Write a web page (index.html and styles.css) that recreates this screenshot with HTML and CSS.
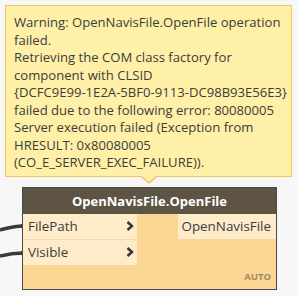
FILE: index.html
```html
<!DOCTYPE html>
<html lang="en">
<head>
  <meta charset="UTF-8">
  <title>OpenNavisFile.OpenFile</title>
  <link rel="stylesheet" href="styles.css">
</head>
<body>
  <div class="warning">
    Warning: OpenNavisFile.OpenFile operation<br>
    failed.<br>
    Retrieving the COM class factory for<br>
    component with CLSID<br>
    {DCFC9E99-1E2A-5BF0-9113-DC98B93E56E3}<br>
    failed due to the following error: 80080005<br>
    Server execution failed (Exception from<br>
    HRESULT: 0x80080005<br>
    (CO_E_SERVER_EXEC_FAILURE)).
  </div>

  <div class="canvas">
    <svg class="wires" width="26" height="90" viewBox="0 0 26 90">
      <path d="M0 55 C 8 53, 14 51, 23 51" />
      <path d="M0 81 C 8 79, 14 78, 23 78" />
      <circle cx="23" cy="51" r="2.5" />
      <circle cx="23" cy="78" r="2.5" />
    </svg>
    <div class="node">
      <div class="node-title">OpenNavisFile.OpenFile</div>
      <div class="node-body">
        <div class="inputs">
          <div class="port">
            <span>FilePath</span>
            <svg class="chev" width="8" height="10" viewBox="0 0 8 10"><path d="M1.5 1 L6 5 L1.5 9" /></svg>
          </div>
          <div class="port">
            <span>Visible</span>
            <svg class="chev" width="8" height="10" viewBox="0 0 8 10"><path d="M1.5 1 L6 5 L1.5 9" /></svg>
          </div>
        </div>
        <div class="outputs">
          <div class="out">OpenNavisFile</div>
        </div>
      </div>
      <div class="node-foot">AUTO</div>
    </div>
  </div>
</body>
</html>
```

FILE: styles.css
```css
body {
  margin: 0;
  background: #f7f7f7;
  font-family: "Open Sans", sans-serif;
}
.warning {
  position: relative;
  box-sizing: border-box;
  width: 287px;
  margin: 5px 0 0 5px;
  padding: 8px 4px 4px 8px;
  background: #fff0a8;
  border: 1px solid #f3c462;
  color: #3c3c3c;
  font-size: 13.1px;
  line-height: 17.5px;
  white-space: nowrap;
}
.warning::before {
  content: "";
  position: absolute;
  left: 135px;
  bottom: -8px;
  border-left: 8px solid transparent;
  border-right: 8px solid transparent;
  border-top: 7px solid #f3c462;
}
.warning::after {
  content: "";
  position: absolute;
  left: 136px;
  bottom: -6px;
  border-left: 7px solid transparent;
  border-right: 7px solid transparent;
  border-top: 6px solid #fff0a8;
}
.canvas {
  position: relative;
  padding: 10px 0 0 22px;
}
.wires {
  position: absolute;
  left: 0;
  top: -2px;
}
.wires path {
  fill: none;
  stroke: #3b3b3b;
  stroke-width: 3.5;
}
.wires circle {
  fill: #3b3b3b;
}
.node {
  position: relative;
  box-sizing: border-box;
  width: 255px;
  height: 103px;
  background: #fcd793;
  border: 1px solid #4a4a4a;
  display: flex;
  flex-direction: column;
}
.node-title {
  height: 26px;
  background: #5e5444;
  color: #fff;
  font-weight: bold;
  font-size: 13px;
  line-height: 26px;
  text-align: center;
}
.node-body {
  display: flex;
  justify-content: space-between;
}
.inputs {
  width: 114px;
}
.port {
  display: flex;
  justify-content: space-between;
  align-items: center;
  height: 25px;
  padding: 0 3px 0 5px;
  background: #fdebc9;
  border-bottom: 1px solid #f6d9a2;
  color: #3c3c3c;
  font-size: 13.4px;
}
.chev path {
  fill: none;
  stroke: #333;
  stroke-width: 2.4;
}
.out {
  height: 25px;
  width: 98px;
  box-sizing: border-box;
  padding-right: 5px;
  background: #fdebc9;
  color: #3c3c3c;
  font-size: 13.4px;
  line-height: 25px;
  text-align: right;
}
.node-foot {
  margin-top: auto;
  padding: 0 5px 6px 0;
  text-align: right;
  font-size: 9.5px;
  font-weight: bold;
  color: #9a8a6a;
}
```
